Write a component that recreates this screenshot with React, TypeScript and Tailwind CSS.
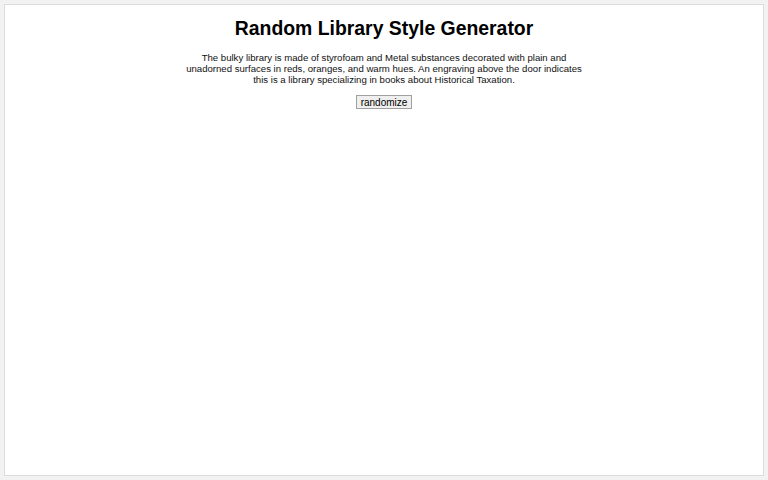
export default function App() {
  return (
    <div className="min-h-[480px] bg-[#f2f2f2] p-[4px] font-['Liberation_Sans',Arial,sans-serif]">
      <div className="h-[472px] border border-[#dcdcdc] bg-white flex flex-col items-center">
        <h1 className="mt-[11px] text-[19.4px] leading-[24px] font-bold text-black">
          Random Library Style Generator
        </h1>
        <p className="mt-[12px] w-[400px] text-center text-[9.6px] leading-[11px] text-[#111]">
          The bulky library is made of styrofoam and Metal substances decorated with plain and
          unadorned surfaces in reds, oranges, and warm hues. An engraving above the door indicates
          this is a library specializing in books about Historical Taxation.
        </p>
        <button className="mt-[10px] border border-[#a0a0a0] bg-[#efefef] px-[4px] text-[10px] leading-[11px] h-[14px] text-black">
          randomize
        </button>
      </div>
    </div>
  );
}
